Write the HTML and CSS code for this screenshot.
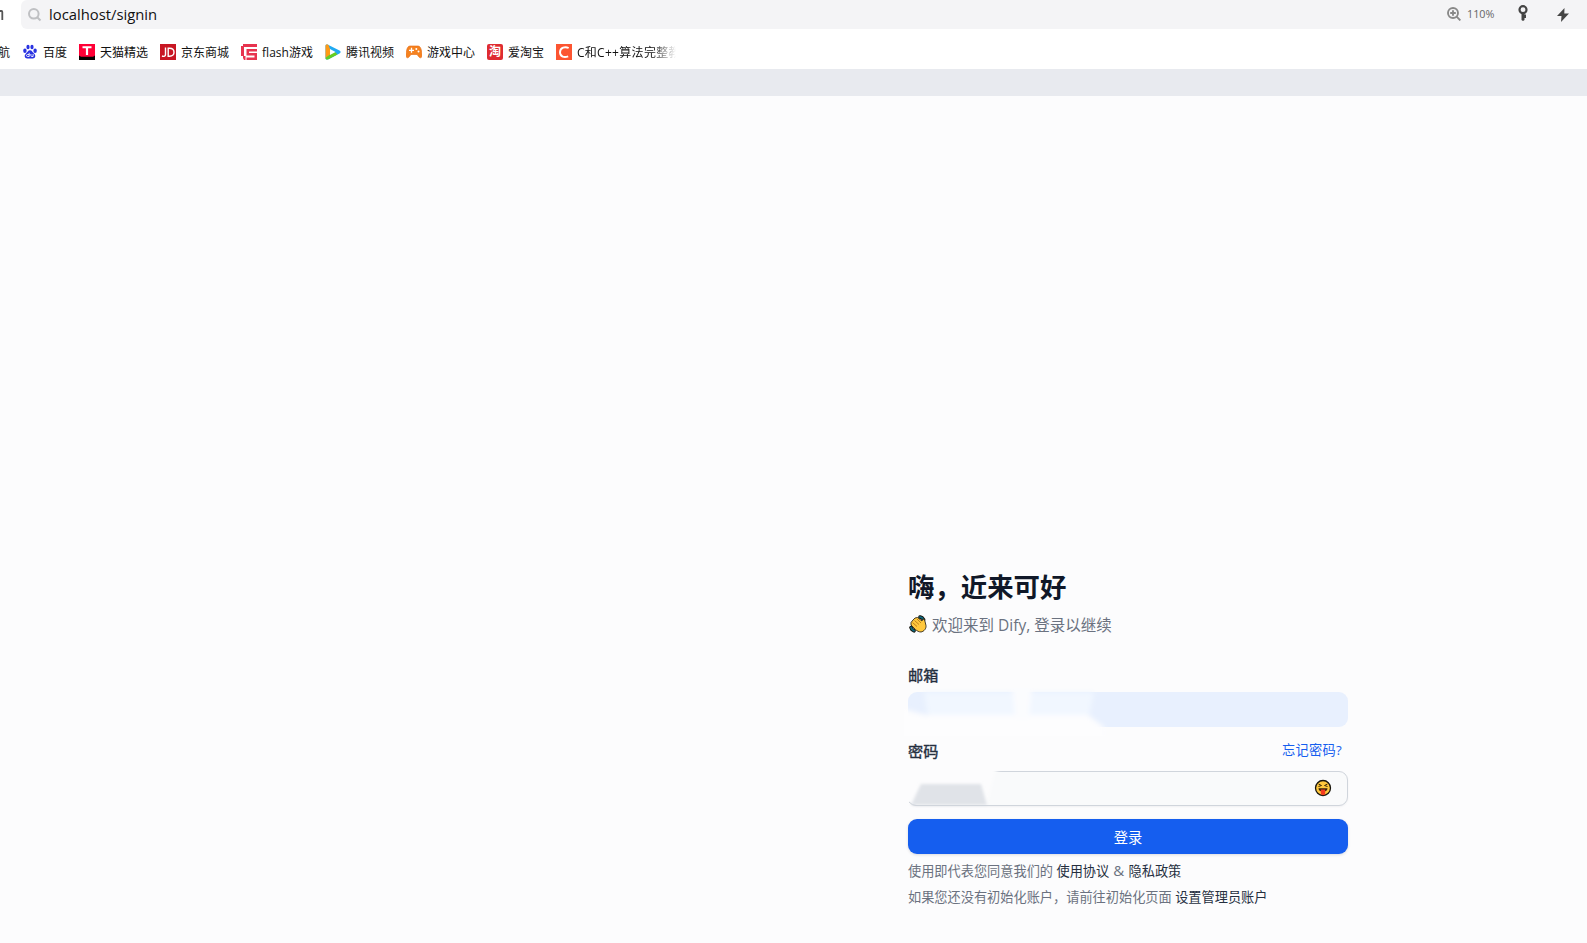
FILE: index.html
```html
<!DOCTYPE html>
<html lang="zh-CN">
<head>
    <meta charset="UTF-8">
    <meta name="viewport" content="width=device-width, initial-scale=1.0">
    <title>Dify</title>
    <link rel="stylesheet" href="styles.css">
</head>
<body>
    <header class="browser">
        <div class="toolbar">
            <svg class="home-icon" viewBox="0 0 8 14"><path d="M0 3h1.500q.8 0 .8 1v8" fill="none" stroke="#555" stroke-width="1.800"/></svg>
            <div class="address">
                <svg class="search-icon" viewBox="0 0 14 14" fill="none" stroke="#bfc0c3" stroke-width="2"><circle cx="5.800" cy="5.800" r="4.800"/><path d="M9.200 9.200l3.300 3.300"/></svg>
                <span class="url">localhost/signin</span>
                <svg class="zoom-icon" viewBox="0 0 14 14" fill="none" stroke="#888" stroke-width="1.900"><circle cx="6" cy="6" r="5"/><path d="M3.200 6h5.600M6 3.200v5.600M9.600 9.600l3.800 3.800"/></svg>
                <span class="zoom-level">110%</span>
                <svg class="key-icon" viewBox="0 0 10 16"><circle cx="5" cy="4.700" r="3.500" fill="none" stroke="#444" stroke-width="2.200"/><path d="M3.500 8h3v1.500H8V13H6.500v2L5 16l-1.500-1z" fill="#444"/></svg>
                <svg class="bolt-icon" viewBox="0 0 12 14"><path d="M7.500 0L0 8h4.500L4 14l8-8.500H7.300z" fill="#444"/></svg>
            </div>
        </div>
        <nav class="bookmarks">
            <span class="cut">航</span>
            <a class="bookmark">
                <svg viewBox="0 0 16 16" fill="#2932e1"><ellipse cx="2.900" cy="6.800" rx="1.700" ry="2.200"/><ellipse cx="6" cy="3" rx="1.600" ry="2.200"/><ellipse cx="10" cy="3" rx="1.600" ry="2.200"/><ellipse cx="13.100" cy="6.800" rx="1.700" ry="2.200"/><path d="M8 6.200c2 0 2.500 2 4 3.400 2.500 2.300 1 5-1.200 4.900-1.800-.1-3.600-.1-5.500 0C3 14.600 1.500 12 4 9.600 5.500 8.200 6 6.200 8 6.200z"/><path d="M7.200 8.800v3.700H5.600c-1.500 0-1.500-2 0-2h1.600M8.900 10v1.500c0 .8.400 1 1 1h1.200V10" fill="none" stroke="#fff" stroke-width=".9"/></svg>
                <span>百度</span>
            </a>
            <a class="bookmark">
                <svg viewBox="0 0 16 16"><path d="M0 0h16v16H0z" fill="#ff0036"/><path d="M0 11.500l2 1.300h12l2-1.300V16H0z" fill="#080000"/><path d="M3.500 2.200h9v2H9.100V11H6.900V4.200H3.500z" fill="#fff"/></svg>
                <span>天猫精选</span>
            </a>
            <a class="bookmark">
                <svg viewBox="0 0 16 16"><path d="M0 0h16v16H0z" fill="#c81623"/><path d="M5.500 3.500v7c0 1.600-1.500 2.300-3.500 1.500M8.200 4.200v8h1.300c3.200 0 4.500-1.700 4.500-4s-1.300-4-4.500-4z" fill="none" stroke="#fff" stroke-width="1.400"/></svg>
                <span>京东商城</span>
            </a>
            <a class="bookmark">
                <svg viewBox="0 0 16 16"><path d="M2 0h14v3H3v9h1.500v4H3l-1-2v-2H0V2h2zM5.500 5H16v2.500H8V9h8v7H5.500v-2.500h8v-2h-8z" fill="#e7344f"/></svg>
                <span>flash游戏</span>
            </a>
            <a class="bookmark">
                <svg viewBox="0 0 16 16"><path d="M.5 2C.5.500 2 .2 3.500 1l11 5.500c1.500.8 1.500 2.200 0 3l-11 5.700c-1.500.8-3 .2-3-1.200z" fill="#20aaf2"/><path d="M.5 2C.5.500 2 .2 3.500 1L5 5v6L.5 14z" fill="#ff9a16"/><path d="M.5 14L5 10.500 10 8l2.500 2.500-9 4.700c-1.500.8-3 .2-3-1.200z" fill="#65cd20"/><path d="M5 5l5.500 3L5 11z" fill="#fff"/></svg>
                <span>腾讯视频</span>
            </a>
            <a class="bookmark">
                <svg viewBox="0 0 16 16"><path d="M4 2h8c2 0 3 2 3.500 5 .7 4 .7 6.800-1 6.800-1.500 0-2.500-2.300-3.500-3.300H5c-1 1-2 3.300-3.500 3.300-1.700 0-1.700-2.800-1-6.800C1 4 2 2 4 2z" fill="#f58220" stroke="#e56a10" stroke-width=".6"/><path d="M3 6.300h5M5.500 3.800v5" stroke="#fff" stroke-width="1.300"/><circle cx="10.300" cy="5" r="1" fill="#fff"/><circle cx="12.500" cy="7.500" r="1" fill="#fff"/></svg>
                <span>游戏中心</span>
            </a>
            <a class="bookmark">
                <b class="taobao">淘</b>
                <span>爱淘宝</span>
            </a>
            <a class="bookmark">
                <svg viewBox="0 0 16 16"><path d="M0 0h16v16H0z" fill="#fc5531"/><path d="M12.700 4C9.500 2.400 4 3 4 8.300c0 4.700 4.500 5.500 8.200 4" fill="none" stroke="#fff" stroke-width="1.900"/></svg>
                <span class="fade">C和C++算法完整教</span>
            </a>
        </nav>
        <div class="strip"></div>
    </header>

    <main class="signin">
        <div class="form">
            <h1>嗨，近来可好</h1>
            <p class="welcome">
                <svg class="wave" viewBox="0 0 18 18"><path d="M2 12.500l1 2 2 1.300M11 2l2 .7 1.500 2" fill="none" stroke="#17140c" stroke-width="3.600" stroke-linecap="round"/><path d="M2 12.500l1 2 2 1.300M11 2l2 .7 1.500 2" fill="none" stroke="#0b6d86" stroke-width="1.800" stroke-linecap="round"/><path d="M2 7.500L4 5l2-2 2.500-.5L13 6l.5-2 2 .5 1.500 6c.5 3-2 6-5 6.500-2 0-4-1-5.500-2.500L2 10z" fill="#ffc83d" stroke="#17140c" stroke-width=".8" stroke-linejoin="round"/><path d="M3.500 7.500l4.500 4M5.500 5.500l4.500 4M8 4l4 4" stroke="#b77b17" stroke-width=".9" fill="none"/></svg>
                <span>欢迎来到 Dify, 登录以继续</span>
            </p>

            <div class="label-row"><label>邮箱</label></div>
            <div class="field email">
                <svg class="smudge" viewBox="0 0 210 48">
                    <defs><filter id="soft"><feGaussianBlur stdDeviation="2.500"/></filter></defs>
                    <g filter="url(#soft)"><path d="M20 4h170l-5 24H24z" fill="#f1f7ff"/><path d="M-4 20l26 7h162l16 12v12H-4z" fill="#fdfdfe"/><path d="M108-2h20l-3 32h-14z" fill="#fbfcfe"/></g>
                </svg>
            </div>

            <div class="label-row password-label"><label>密码</label><a class="forgot">忘记密码?</a></div>
            <div class="field password">
                <svg class="smudge" viewBox="0 0 210 48">
                    <defs><filter id="haze"><feGaussianBlur stdDeviation="1.500"/></filter></defs>
                    <path d="M-4-2h105l-10 8-8 31H5L-2 34z" fill="#fcfcfd" filter="url(#haze)"/>
                    <path d="M17 17h60l6 21H7z" fill="#e0e3e8" filter="url(#haze)"/>
                    <path d="M5 35q3 3.500 7 3.500h86" fill="none" stroke="#d0d5dc"/>
                </svg>
                <svg class="face" viewBox="0 0 18 18"><circle cx="9" cy="9" r="7.500" fill="#ffc83d" stroke="#17140c" stroke-width="1.300"/><path d="M4.500 5l3 1.500-3 1M13.500 5l-3 1.500 3 1" fill="none" stroke="#3c2908"/><path d="M4.500 9.300h9c0 2-1.500 2.700-2.500 3H7c-1-.3-2.500-1-2.500-3z" fill="#35220d"/><path d="M6.800 10.500h4.400v4c-.4 2.200-4 2.200-4.400 0z" fill="#f43b20"/></svg>
            </div>

            <button class="submit">登录</button>

            <p class="note">使用即代表您同意我们的 <a>使用协议</a> <span class="amp">&amp;</span> <a>隐私政策</a></p>
            <p class="note">如果您还没有初始化账户，请前往初始化页面 <a>设置管理员账户</a></p>
        </div>
    </main>
</body>
</html>
```
FILE: styles.css
```css
* {
    box-sizing: border-box;
}

body {
    margin: 0;
    height: 943px;
    overflow: hidden;
    background: #fcfcfd;
    font-family: "Open Sans", "Noto Sans CJK SC", sans-serif;
}

svg {
    display: block;
    flex: none;
}

/* browser bars */
.browser {
    background: #fff;
}

.toolbar {
    display: flex;
    height: 29px;
}

.home-icon {
    width: 8px;
    height: 14px;
    margin: 8px 13px 0 0;
}

.address {
    flex: 1;
    display: flex;
    align-items: center;
    padding: 0 18px 0 7px;
    background: #f4f4f6;
    border-radius: 6px 0 0 6px;
}

.search-icon {
    width: 14px;
    height: 14px;
}

.url {
    margin: 0 0 2px 7px;
    font-size: 14.8px;
    line-height: 20px;
    color: #111;
}

.zoom-icon {
    width: 14px;
    height: 14px;
    margin: 0 0 1px auto;
}

.zoom-level {
    width: 27px;
    margin: 0 0 2px 6px;
    font-size: 10.8px;
    color: #666;
}

.key-icon {
    width: 10px;
    height: 16px;
    margin: 0 29px 3px 24px;
}

.bolt-icon {
    width: 12px;
    height: 14px;
}

.bookmarks {
    display: flex;
    align-items: center;
    gap: 12px;
    height: 40px;
    padding-top: 6px;
    font-size: 12px;
    line-height: 18px;
    color: #111;
}

.bookmark {
    display: flex;
    align-items: center;
    gap: 5px;
    white-space: nowrap;
}

.bookmark svg {
    width: 16px;
    height: 16px;
}

.bookmark span {
    padding-top: 2px;
}

.cut {
    margin-left: -2px;
    padding-top: 2px;
}

.taobao {
    width: 16px;
    height: 16px;
    border-radius: 2px;
    background: #df2b31;
    color: #fff;
    font-size: 12px;
    line-height: 15px;
    text-align: center;
}

.fade {
    width: 99px;
    letter-spacing: 0.3px;
    overflow: hidden;
    -webkit-mask-image: linear-gradient(to right, #000 76%, transparent);
    mask-image: linear-gradient(to right, #000 76%, transparent);
}

.strip {
    height: 27px;
    background: #e8eaef;
}

/* sign in form */
.signin {
    padding: 469px 0 0 908px;
}

.form {
    width: 440px;
}

h1 {
    margin: 0;
    font-size: 26.4px;
    line-height: 44px;
    color: #101828;
}

.welcome {
    display: flex;
    align-items: center;
    gap: 5px;
    height: 30px;
    margin: 0 0 23px;
    padding-left: 1px;
    font-size: 15.5px;
    color: #6b7280;
}

.wave {
    width: 18px;
    height: 18px;
}

.label-row {
    display: flex;
    justify-content: space-between;
    align-items: center;
    height: 26px;
    margin-bottom: 4px;
    padding-right: 6px;
    font-size: 15.2px;
    line-height: 26px;
}

.label-row label {
    color: #252f3f;
    -webkit-text-stroke: 0.4px #252f3f;
}

.password-label {
    margin: 11px 0 7px;
}

.forgot {
    padding-bottom: 2px;
    font-size: 13.2px;
    letter-spacing: 0.3px;
    color: #155eef;
}

.field {
    position: relative;
    height: 35px;
    border-radius: 9px;
}

.email {
    background: #e8f0fe;
}

.password {
    display: flex;
    align-items: center;
    justify-content: flex-end;
    padding: 0 15px 2px 0;
    border: 1px solid #d0d5dc;
    background: #f9fafb;
    box-shadow: 0 1px 2px rgba(16, 24, 40, 0.05);
}

.smudge {
    position: absolute;
    top: -4px;
    left: -4px;
    width: 210px;
    height: 48px;
}

.password .smudge {
    top: -5px;
    left: -5px;
}

.face {
    width: 18px;
    height: 18px;
}

.submit {
    display: block;
    width: 100%;
    height: 35px;
    margin: 13px 0 4px;
    padding: 0 0 1px;
    border: none;
    border-radius: 9px;
    background: #155eef;
    box-shadow: 0 1px 3px rgba(16, 24, 40, 0.14);
    color: #fff;
    font-family: inherit;
    font-size: 14.3px;
}

.note {
    height: 26px;
    margin: 0;
    font-size: 13.2px;
    line-height: 26px;
    white-space: nowrap;
    color: #6b7280;
}

.note a {
    color: #252f3f;
}

.amp {
    margin: 0 1px 0 0.5px;
    font-size: 15px;
    line-height: 1;
}
```
